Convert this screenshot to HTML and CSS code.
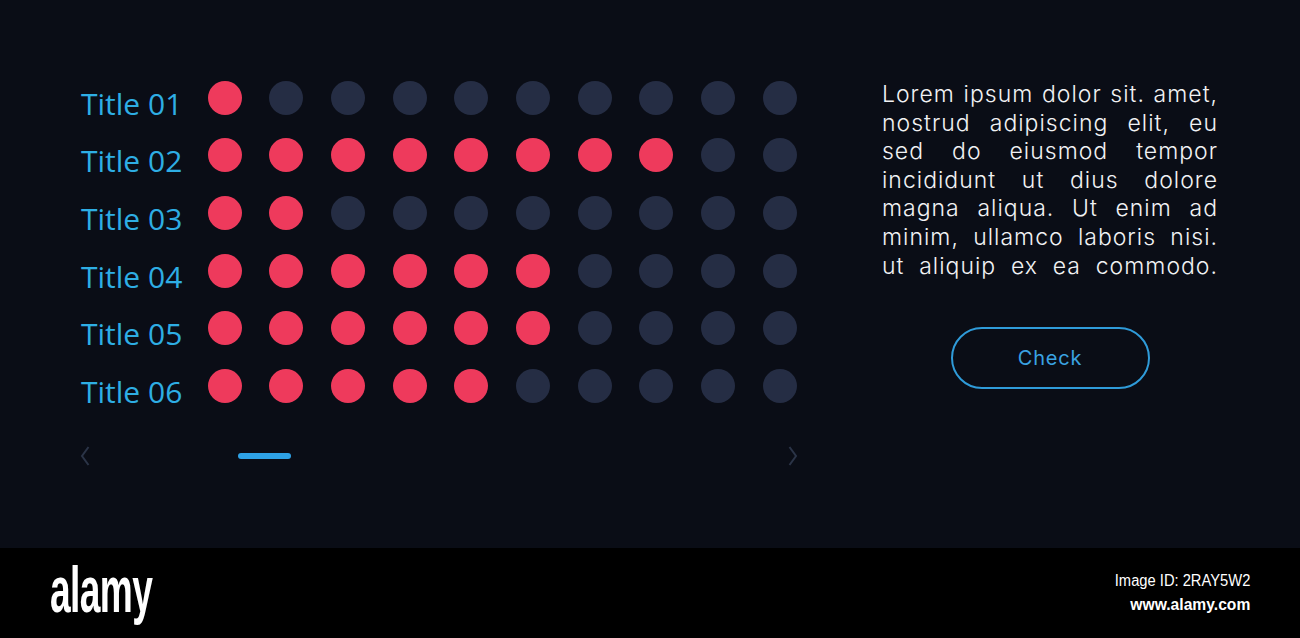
FILE: index.html
```html
<!DOCTYPE html>
<html lang="en">
<head>
    <meta charset="UTF-8">
    <meta name="viewport" content="width=device-width, initial-scale=1.0">
    <title>Progress Board</title>
    <link rel="stylesheet" href="styles.css">
</head>
<body>
    <div class="stage">
        <section class="board">
            <div class="grid">
                <span class="title">Title 01</span>
                <span class="dot on"></span><span class="dot"></span><span class="dot"></span><span class="dot"></span><span class="dot"></span><span class="dot"></span><span class="dot"></span><span class="dot"></span><span class="dot"></span><span class="dot"></span>

                <span class="title">Title 02</span>
                <span class="dot on"></span><span class="dot on"></span><span class="dot on"></span><span class="dot on"></span><span class="dot on"></span><span class="dot on"></span><span class="dot on"></span><span class="dot on"></span><span class="dot"></span><span class="dot"></span>

                <span class="title">Title 03</span>
                <span class="dot on"></span><span class="dot on"></span><span class="dot"></span><span class="dot"></span><span class="dot"></span><span class="dot"></span><span class="dot"></span><span class="dot"></span><span class="dot"></span><span class="dot"></span>

                <span class="title">Title 04</span>
                <span class="dot on"></span><span class="dot on"></span><span class="dot on"></span><span class="dot on"></span><span class="dot on"></span><span class="dot on"></span><span class="dot"></span><span class="dot"></span><span class="dot"></span><span class="dot"></span>

                <span class="title">Title 05</span>
                <span class="dot on"></span><span class="dot on"></span><span class="dot on"></span><span class="dot on"></span><span class="dot on"></span><span class="dot on"></span><span class="dot"></span><span class="dot"></span><span class="dot"></span><span class="dot"></span>

                <span class="title">Title 06</span>
                <span class="dot on"></span><span class="dot on"></span><span class="dot on"></span><span class="dot on"></span><span class="dot on"></span><span class="dot"></span><span class="dot"></span><span class="dot"></span><span class="dot"></span><span class="dot"></span>
            </div>

            <div class="pager">
                <svg class="arrow" width="10" height="22" viewBox="0 0 10 22">
                    <polyline points="8.5,2 2,11 8.5,20" fill="none" stroke="#2b3447" stroke-width="2"/>
                </svg>
                <span class="bar"></span>
                <svg class="arrow next" width="10" height="22" viewBox="0 0 10 22">
                    <polyline points="1.5,2 8,11 1.5,20" fill="none" stroke="#2b3447" stroke-width="2"/>
                </svg>
            </div>
        </section>

        <aside class="info">
            <p class="lead">
                <span>Lorem ipsum dolor sit. amet,</span>
                <span>nostrud adipiscing elit, eu</span>
                <span>sed do eiusmod tempor</span>
                <span>incididunt ut dius dolore</span>
                <span>magna aliqua. Ut enim ad</span>
                <span>minim, ullamco laboris nisi.</span>
                <span>ut aliquip ex ea commodo.</span>
            </p>
            <button class="check">Check</button>
        </aside>
    </div>

    <footer class="credit">
        <span class="logo">alamy</span>
        <div class="meta">
            <span class="id">Image ID: 2RAY5W2</span>
            <span class="site">www.alamy.com</span>
        </div>
    </footer>
</body>
</html>
```

FILE: styles.css
```css
body {
    margin: 0;
    background: #000;
    font-family: "Open Sans", Arial, sans-serif;
}
.stage {
    display: flex;
    height: 548px;
    box-sizing: border-box;
    padding: 69px 0 0 81px;
    background: #0a0d16;
}
.board {
    width: 717px;
}
.grid {
    display: grid;
    grid-template-columns: 99px repeat(10, 34px);
    grid-auto-rows: 57.6px;
    column-gap: 27.67px;
    align-items: center;
}
.title {
    color: #2eaee4;
    font-size: 30px;
    white-space: nowrap;
    padding-top: 11px;
}
.dot {
    width: 34px;
    height: 34px;
    border-radius: 50%;
    background: #252d44;
}
.dot.on {
    background: #ee3a5c;
}
.pager {
    display: flex;
    align-items: center;
    margin-top: 30px;
    margin-left: -1px;
    height: 22px;
}
.bar {
    width: 53px;
    height: 6px;
    border-radius: 3px;
    background: #2ea2e6;
    margin-left: 148px;
}
.arrow.next {
    margin-left: auto;
}
.info {
    width: 336px;
    margin-left: 84px;
    display: flex;
    flex-direction: column;
    align-items: center;
}
.lead {
    margin: 11px 0 0;
    width: 100%;
    color: #f1f2f4;
    font-family: Inter, "Open Sans", sans-serif;
    font-weight: 300;
    font-size: 23px;
    letter-spacing: 1px;
    line-height: 28.6px;
}
.lead span {
    display: block;
    text-align: justify;
    text-align-last: justify;
}
.check {
    margin-top: 47px;
    width: 199px;
    height: 62px;
    border: 2px solid #2f9bd9;
    border-radius: 31px;
    background: transparent;
    color: #3aa3e2;
    font-family: Inter, "Open Sans", sans-serif;
    font-size: 20px;
    letter-spacing: 0.8px;
    cursor: pointer;
}
.credit {
    height: 90px;
    background: #000;
    display: flex;
    align-items: center;
    justify-content: space-between;
    padding: 0 50px;
    color: #fff;
}
.logo {
    font-family: "Liberation Sans", Arial, sans-serif;
    font-weight: bold;
    font-size: 64px;
    letter-spacing: -1px;
    transform: scaleX(0.58);
    transform-origin: left center;
    margin-top: -6px;
}
.meta {
    display: flex;
    flex-direction: column;
    align-items: flex-end;
    gap: 5px;
    font-family: "Liberation Sans", Arial, sans-serif;
    transform: scaleX(0.92);
    transform-origin: right center;
}
.id {
    font-size: 16px;
}
.site {
    font-size: 17px;
    font-weight: bold;
}
```
